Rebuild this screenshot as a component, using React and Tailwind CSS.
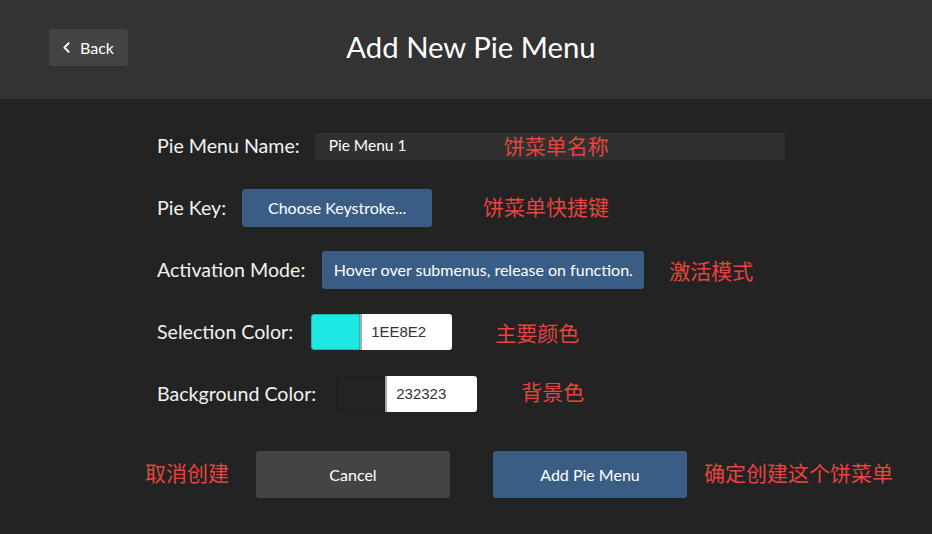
import { ChevronLeft } from "lucide-react";

const note = "text-[#e8443f] text-[21px] leading-none whitespace-nowrap font-['Noto_Sans_CJK_SC',sans-serif]";

function ColorField({ value }) {
  return (
    <div className="flex h-[36px] rounded-[3px] overflow-hidden">
      <div
        className="w-[49px] h-full rounded-l-[3px] border border-black/20"
        style={{ backgroundColor: "#" + value }}
      />
      <div className="w-[92px] h-full bg-white border-l-2 border-[#aaa] flex items-center pl-[9px] text-[15px] text-[#333] font-['Liberation_Sans',sans-serif]">
        {value}
      </div>
    </div>
  );
}

function Row({ label, gap, children }) {
  return (
    <div className={`h-[62px] flex items-center ${gap}`}>
      <span className="text-[19.6px] text-[#f2f2f2]">{label}</span>
      {children}
    </div>
  );
}

export default function App() {
  return (
    <div className="w-[932px] h-[534px] bg-[#232323] font-['Lato',sans-serif] text-white overflow-hidden">
      {/* Header */}
      <header className="relative h-[99px] bg-[#333333] flex items-center justify-center">
        <button className="absolute left-[49px] top-[29px] w-[79px] h-[37px] rounded-[3px] bg-[#444444] flex items-center pl-[9px] gap-[5px] text-[16px] text-white">
          <ChevronLeft size={17} strokeWidth={2.6} />
          <span>Back</span>
        </button>
        <h1 className="text-[29.3px] font-normal leading-none mt-[-6px] ml-[10px]">Add New Pie Menu</h1>
      </header>

      {/* Form */}
      <div className="pl-[157px] pt-[16px]">
        <Row label="Pie Menu Name:" gap="gap-[15px]">
          <div className="relative w-[470px] h-[27px] bg-[#303030] flex items-center pl-[14px] text-[15.5px]">
            Pie Menu 1
            <span className={`absolute left-[189px] top-[2px] ${note}`}>饼菜单名称</span>
          </div>
        </Row>

        <Row label="Pie Key:" gap="gap-[16px]">
          <button className="w-[190px] h-[38px] rounded-[3px] bg-[#3a5d85] text-[16px] text-white">
            Choose Keystroke...
          </button>
          <span className={`ml-[35px] mt-[-4px] ${note}`}>饼菜单快捷键</span>
        </Row>

        <Row label="Activation Mode:" gap="gap-[17px]">
          <button className="w-[322px] h-[38px] rounded-[3px] bg-[#3a5d85] text-[16px] text-white">
            Hover over submenus, release on function.
          </button>
          <span className={`ml-[8px] ${note}`}>激活模式</span>
        </Row>

        <Row label="Selection Color:" gap="gap-[18px]">
          <ColorField value="1EE8E2" />
          <span className={`ml-[25px] ${note}`}>主要颜色</span>
        </Row>

        <Row label="Background Color:" gap="gap-[20px]">
          <ColorField value="232323" />
          <span className={`ml-[24px] mt-[-6px] ${note}`}>背景色</span>
        </Row>
      </div>

      {/* Actions */}
      <div className="flex items-center mt-[26px] pl-[145px]">
        <span className={`mt-[-4px] ${note}`}>取消创建</span>
        <button className="ml-[27px] w-[194px] h-[47px] rounded-[3px] bg-[#444444] text-[16px] text-white">
          Cancel
        </button>
        <button className="ml-[43px] w-[194px] h-[47px] rounded-[3px] bg-[#3a5d85] text-[16px] text-white">
          Add Pie Menu
        </button>
        <span className={`ml-[17px] mt-[-4px] ${note}`}>确定创建这个饼菜单</span>
      </div>
    </div>
  );
}
